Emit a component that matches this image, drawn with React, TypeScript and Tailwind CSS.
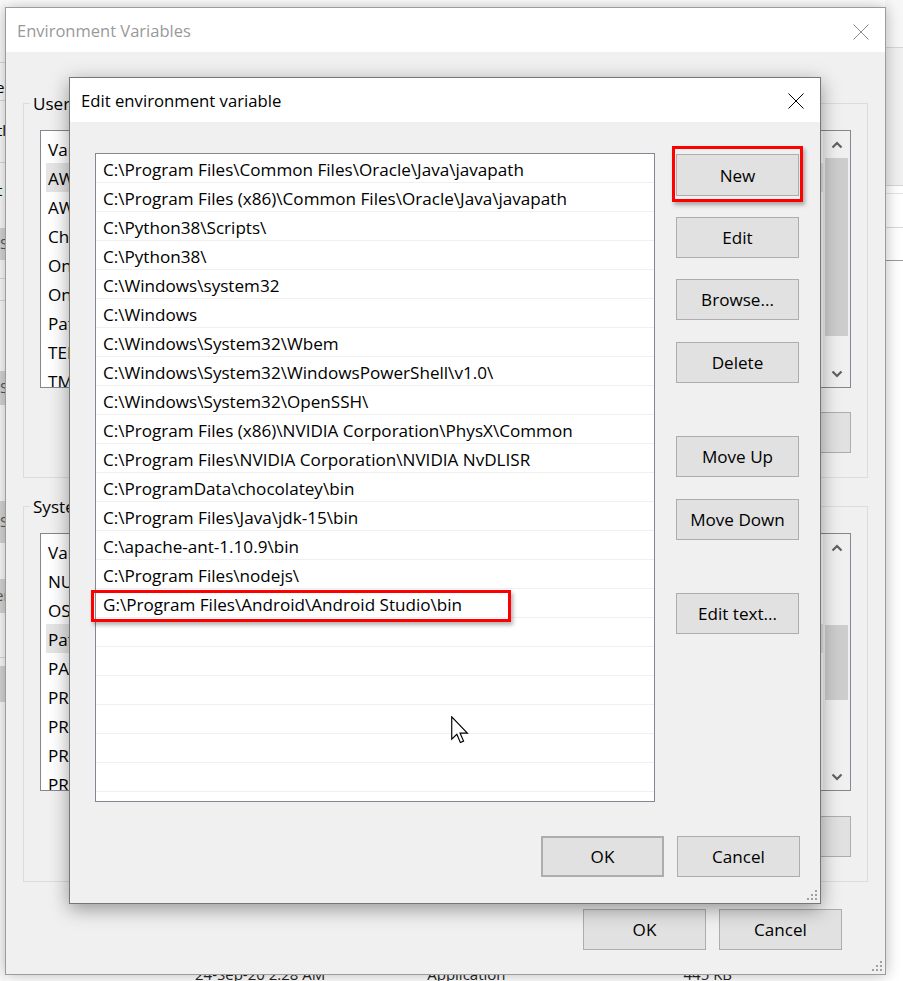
import React from "react";

// Segoe UI stand-in
const FONT = "font-['Open_Sans','Noto_Sans',sans-serif]";

const PATHS = [
  "C:\\Program Files\\Common Files\\Oracle\\Java\\javapath",
  "C:\\Program Files (x86)\\Common Files\\Oracle\\Java\\javapath",
  "C:\\Python38\\Scripts\\",
  "C:\\Python38\\",
  "C:\\Windows\\system32",
  "C:\\Windows",
  "C:\\Windows\\System32\\Wbem",
  "C:\\Windows\\System32\\WindowsPowerShell\\v1.0\\",
  "C:\\Windows\\System32\\OpenSSH\\",
  "C:\\Program Files (x86)\\NVIDIA Corporation\\PhysX\\Common",
  "C:\\Program Files\\NVIDIA Corporation\\NVIDIA NvDLISR",
  "C:\\ProgramData\\chocolatey\\bin",
  "C:\\Program Files\\Java\\jdk-15\\bin",
  "C:\\apache-ant-1.10.9\\bin",
  "C:\\Program Files\\nodejs\\",
  "G:\\Program Files\\Android\\Android Studio\\bin",
  "",
  "",
  "",
  "",
  "",
  "",
];

const USER_VARS = [
  "AWS_ACCESS_KEY_ID",
  "AWS_SECRET_ACCESS_KEY",
  "ChocolateyLastPathUpdate",
  "OneDrive",
  "OneDriveConsumer",
  "Path",
  "TEMP",
  "TMP",
];

const SYSTEM_VARS = [
  "NUMBER_OF_PROCESSORS",
  "OS",
  "Path",
  "PATHEXT",
  "PROCESSOR_ARCHITECTURE",
  "PROCESSOR_IDENTIFIER",
  "PROCESSOR_LEVEL",
  "PROCESSOR_REVISION",
];

function Chevron({ down = false }: { down?: boolean }) {
  return (
    <svg width="12" height="8" viewBox="0 0 12 8" className={down ? "rotate-180" : ""}>
      <polyline points="1.5,6.5 6,2 10.5,6.5" fill="none" stroke="#606060" strokeWidth="2.2" />
    </svg>
  );
}

function CloseX({ color }: { color: string }) {
  return (
    <svg width="16" height="16" viewBox="0 0 16 16">
      <path d="M0.5 0.5 L15.5 15.5 M15.5 0.5 L0.5 15.5" stroke={color} strokeWidth="1" fill="none" />
    </svg>
  );
}

function Grip() {
  return (
    <svg width="10" height="10" viewBox="0 0 10 10">
      <rect x="8" y="0" width="2" height="2" fill="#a0a0a0" />
      <rect x="4" y="4" width="2" height="2" fill="#a0a0a0" />
      <rect x="8" y="4" width="2" height="2" fill="#a0a0a0" />
      <rect x="0" y="8" width="2" height="2" fill="#a0a0a0" />
      <rect x="4" y="8" width="2" height="2" fill="#a0a0a0" />
      <rect x="8" y="8" width="2" height="2" fill="#a0a0a0" />
    </svg>
  );
}

function WinButton({ children, className = "" }: { children: React.ReactNode; className?: string }) {
  return (
    <div
      className={`flex h-[41px] w-[123px] shrink-0 items-center justify-center border border-[#adadad] bg-[#e1e1e1] pt-[1px] text-black ${className}`}
    >
      {children}
    </div>
  );
}

function VarList({
  rows,
  selected,
  gapBefore,
  thumbH,
}: {
  rows: string[];
  selected: number;
  gapBefore: string;
  thumbH: string;
}) {
  return (
    <div className="flex h-[258px] border border-[#828790] bg-white">
      <div className="flex-1 overflow-hidden pt-[3px]">
        <div className="flex h-[29px] items-center pl-[7px] pt-[2px]">Variable</div>
        {rows.map((r, i) => (
          <div
            key={r + i}
            className={`ml-[5px] flex h-[29px] items-center pl-[2px] pt-[2px] ${i === selected ? "bg-[#e5e5e5]" : ""}`}
          >
            {r}
          </div>
        ))}
      </div>
      <div className="flex w-[27px] flex-col bg-[#f0f0f0]">
        <div className="flex h-[27px] items-center justify-center">
          <Chevron />
        </div>
        <div className={gapBefore} />
        <div className={`mx-[2px] bg-[#cdcdcd] ${thumbH}`} />
        <div className="flex-1" />
        <div className="flex h-[27px] items-center justify-center">
          <Chevron down />
        </div>
      </div>
    </div>
  );
}

function GroupBox({ label, children, className = "" }: { label: string; children: React.ReactNode; className?: string }) {
  return (
    <div className={`relative ml-[17px] mr-[17px] border border-[#dcdcdc] px-[16px] pt-[26px] ${className}`}>
      <span className="absolute -top-[13px] left-[6px] bg-[#f0f0f0] px-[3px]">{label}</span>
      {children}
    </div>
  );
}

function Cursor() {
  return (
    <svg width="19" height="28" viewBox="0 0 13 19" className="absolute left-[451px] top-[716px]">
      <path
        d="M0.5 0.5 V15.8 L4 12.4 L6.4 18 L8.6 17.1 L6.2 11.6 H11.2 Z"
        fill="#ffffff"
        stroke="#000000"
        strokeWidth="0.8"
        strokeLinejoin="miter"
      />
    </svg>
  );
}

export default function App() {
  return (
    <div className={`relative h-[981px] w-[903px] overflow-hidden bg-white text-[17.1px] text-black ${FONT}`}>
      {/* Stuff behind, left edge */}
      <div className="absolute left-0 top-0 flex h-full w-[6px] flex-col bg-[#fbfbfb] text-[15px] leading-none">
        <div className="h-[62px]" />
        <div className="h-px bg-[#dadada]" />
        <div className="-ml-[4px] pt-[17px]">e</div>
        <div className="mt-[5px] h-px bg-[#dadada]" />
        <div className="-ml-[3px] pt-[22px]">tl</div>
        <div className="mt-[24px] h-px bg-[#dadada]" />
        <div className="-ml-[3px] pt-[20px]">t</div>
        <div className="mt-[30px] h-[32px] bg-[#d6d6d6] pl-0 pt-[8px] text-[#555]">S</div>
        <div className="mt-[18px] h-px bg-[#dadada]" />
        <div className="mt-[21px] h-px bg-[#dadada]" />
        <div className="mt-[70px] h-[34px] bg-[#d6d6d6] pt-[9px] text-[#555]">S</div>
        <div className="mt-[96px] h-[42px] bg-[#d6d6d6] pt-[13px] text-[#555]">S</div>
        <div className="mt-[36px] h-[34px] bg-[#d6d6d6] pt-[9px] text-[#555]">
          <span className="-ml-[5px]">er</span>
        </div>
        <div className="mt-[44px] h-px bg-[#dadada]" />
        <div className="mt-[8px] h-[36px] bg-[#d6d6d6]" />
      </div>

      {/* Stuff behind, right edge */}
      <div className="absolute right-0 top-0 flex w-[18px] flex-col">
        <div className="h-[47px] bg-[#f7f7f7]" />
        <div className="h-px bg-[#d6d6d6]" />
        <div className="h-[137px] bg-[#f0f0f0]" />
        <div className="h-px bg-[#d6d6d6]" />
        <div className="h-[7px]" />
        <div className="h-px bg-[#e3e3e3]" />
        <div className="h-[33px]" />
        <div className="h-px bg-[#d9d9d9]" />
        <div className="h-[32px]" />
        <div className="h-px bg-[#9a9a9a]" />
      </div>

      {/* File listing row peeking below the main window */}
      <div className="absolute left-0 top-[963px] flex w-full text-[15px] text-[#222]">
        <span className="ml-[195px]">24-Sep-20 2:28 AM</span>
        <span className="ml-[102px]">Application</span>
        <span className="ml-[178px]">445 KB</span>
      </div>

      {/* Environment Variables window */}
      <div className="absolute left-[5px] top-[7px] flex h-[968px] w-[881px] flex-col border border-[#9c9c9c] bg-[#f0f0f0] shadow-[0_0_14px_rgba(0,0,0,0.28)]">
        <div className="flex h-[44px] shrink-0 items-center justify-between bg-white pl-[11px] pr-[16px] pt-[3px]">
          <span className="text-[16.5px] text-[#999999]">Environment Variables</span>
          <CloseX color="#8c8c8c" />
        </div>

        <GroupBox label="User variables for User" className="mt-[51px] h-[375px]">
          <VarList rows={USER_VARS} selected={0} gapBefore="h-0" thumbH="h-[178px]" />
          <div className="mt-[24px] flex justify-end gap-[13px]">
            <WinButton>New...</WinButton>
            <WinButton>Edit...</WinButton>
            <WinButton>Delete</WinButton>
          </div>
        </GroupBox>

        <GroupBox label="System variables" className="mt-[28px] h-[376px]">
          <VarList rows={SYSTEM_VARS} selected={2} gapBefore="h-[64px]" thumbH="h-[75px]" />
          <div className="mt-[25px] flex justify-end gap-[13px]">
            <WinButton>New...</WinButton>
            <WinButton>Edit...</WinButton>
            <WinButton>Delete</WinButton>
          </div>
        </GroupBox>

        <div className="mr-[43px] mt-[27px] flex justify-end gap-[13px]">
          <WinButton className="w-[122px]">OK</WinButton>
          <WinButton className="w-[122px]">Cancel</WinButton>
        </div>
        <div className="absolute bottom-[3px] right-[3px]">
          <Grip />
        </div>
      </div>

      {/* Edit environment variable dialog */}
      <div className="absolute left-[69px] top-[77px] flex h-[827px] w-[752px] flex-col border border-[#767676] bg-[#f0f0f0] shadow-[0_5px_18px_rgba(0,0,0,0.38)]">
        <div className="flex h-[44px] shrink-0 items-center justify-between bg-white pl-[11px] pr-[16px] pt-[1px]">
          <span className="text-[16.7px]">Edit environment variable</span>
          <CloseX color="#000000" />
        </div>

        <div className="flex flex-1 flex-col pl-[25px] pr-[20px] pt-[31px]">
          <div className="flex">
            <div className="h-[649px] w-[560px] overflow-hidden border border-[#828790] bg-white">
              {PATHS.map((p, i) => (
                <div key={i} className="flex h-[29px] items-center border-b border-[#f0f0f0] pl-[7px] pt-[3px]">
                  {p}
                </div>
              ))}
            </div>

            <div className="ml-[21px] flex flex-col pt-[1px]">
              <WinButton className="h-[42px]">New</WinButton>
              <WinButton className="mt-[21px]">Edit</WinButton>
              <WinButton className="mt-[21px]">Browse...</WinButton>
              <WinButton className="mt-[22px]">Delete</WinButton>
              <WinButton className="mt-[53px]">Move Up</WinButton>
              <WinButton className="mt-[22px]">Move Down</WinButton>
              <WinButton className="mt-[53px]">Edit text...</WinButton>
            </div>
          </div>

          <div className="mt-[34px] flex justify-end gap-[13px]">
            <WinButton className="w-[122px] border-2 border-[#0078d7]">OK</WinButton>
            <WinButton>Cancel</WinButton>
          </div>
        </div>
        <div className="absolute bottom-[3px] right-[3px]">
          <Grip />
        </div>
      </div>

      {/* Red annotation boxes */}
      <div className="absolute left-[672px] top-[146px] h-[56px] w-[131px] border-[3px] border-[#ff0000] shadow-[2px_3px_4px_rgba(0,0,0,0.3)]" />
      <div className="absolute left-[91px] top-[590px] h-[32px] w-[420px] border-[3px] border-[#ff0000] shadow-[2px_3px_4px_rgba(0,0,0,0.3)]" />

      <Cursor />
    </div>
  );
}
